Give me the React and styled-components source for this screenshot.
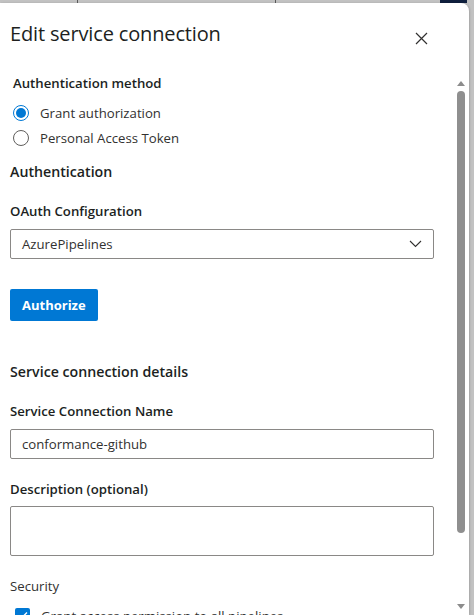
import React from "react";
import styled, { createGlobalStyle } from "styled-components";

const Global = createGlobalStyle`
  html, body { margin: 0; padding: 0; }
  body {
    font-family: "Open Sans", "Noto Sans", "Liberation Sans", sans-serif;
    color: #201f1e;
    background: #c4c4c4;
  }
  * { box-sizing: border-box; }
`;

const Screen = styled.div`
  width: 474px;
  height: 615px;
  overflow: hidden;
  display: flex;
  flex-direction: column;
  background: #c2c2c2;
`;

const BackTabs = styled.div`
  height: 3px;
  flex: none;
  display: flex;
`;

const BackTab = styled.div`
  width: ${(p) => p.$w}px;
  border-right: 1px solid ${(p) => (p.$line ? "#5a5a5a" : "transparent")};
  background: ${(p) => p.$bg || "transparent"};
`;

const Panel = styled.div`
  flex: 1;
  width: 469px;
  background: #ffffff;
  border-top-right-radius: 8px;
  display: flex;
  flex-direction: column;
  overflow: hidden;
  box-shadow: 1px 0 2px rgba(0, 0, 0, 0.15);
`;

const Header = styled.div`
  height: 70px;
  flex: none;
  display: flex;
  align-items: flex-start;
  justify-content: space-between;
  padding: 17px 41px 0 10px;
`;

const Title = styled.h1`
  margin: 0;
  font-size: 20px;
  line-height: 28px;
  font-weight: 400;
  letter-spacing: -0.15px;
  color: #201f1e;
`;

const CloseButton = styled.button`
  border: none;
  background: none;
  padding: 0;
  margin-top: 11px;
  width: 14px;
  height: 14px;
  display: flex;
  align-items: center;
  justify-content: center;
  color: #323130;
`;

const Body = styled.div`
  flex: 1;
  display: flex;
  min-height: 0;
`;

const Content = styled.div`
  flex: 1;
  padding: 0 21px 0 10px;
  overflow: hidden;
`;

const ScrollBar = styled.div`
  width: 14px;
  flex: none;
  margin-right: 1px;
  display: flex;
  flex-direction: column;
  align-items: center;
  padding: 8px 0 6px;
`;

const Arrow = styled.div`
  width: 0;
  height: 0;
  border-left: 4.5px solid transparent;
  border-right: 4.5px solid transparent;
  ${(p) =>
    p.$down
      ? "border-top: 5px solid #8c8c8c;"
      : "border-bottom: 5px solid #8c8c8c;"}
`;

const Thumb = styled.div`
  width: 8px;
  height: 442px;
  margin: 5px 0 auto;
  border-radius: 4px;
  background: #8f8f8f;
`;

const Label = styled.div`
  margin-top: ${(p) => p.$gap || 0}px;
  font-size: 13.2px;
  line-height: 20px;
  font-weight: 600;
  color: #201f1e;
  padding-left: ${(p) => p.$indent || 0}px;
`;

const SectionTitle = styled.div`
  margin-top: ${(p) => p.$gap || 0}px;
  font-size: 14.2px;
  line-height: 22px;
  font-weight: 600;
  color: #201f1e;
`;

const PlainLabel = styled.div`
  margin-top: ${(p) => p.$gap || 0}px;
  font-size: 13.2px;
  line-height: 20px;
  font-weight: 400;
  color: #323130;
`;

const RadioGroup = styled.div`
  margin-top: 7px;
  display: flex;
  flex-direction: column;
  padding-left: 3px;
`;

const RadioRow = styled.label`
  height: 25px;
  display: flex;
  align-items: center;
  gap: 11px;
  font-size: 13.2px;
  color: #323130;
`;

const RadioCircle = styled.span`
  width: 16px;
  height: 16px;
  border-radius: 50%;
  flex: none;
  border: 1px solid ${(p) => (p.$checked ? "#0078d4" : "#605e5c")};
  display: flex;
  align-items: center;
  justify-content: center;
  &::after {
    content: "";
    width: 10px;
    height: 10px;
    border-radius: 50%;
    background: ${(p) => (p.$checked ? "#0078d4" : "transparent")};
  }
`;

const Box = styled.div`
  margin-top: ${(p) => p.$gap || 0}px;
  width: 424px;
  height: ${(p) => p.$h || 30}px;
  border: 1px solid #8a8886;
  border-radius: 2px;
  display: flex;
  align-items: center;
  justify-content: space-between;
  padding: 0 11px 0 11px;
  font-size: 13.2px;
  color: #323130;
`;

const PrimaryButton = styled.button`
  margin-top: 30px;
  height: 32px;
  padding: 0 12px;
  border: none;
  border-radius: 2px;
  background: #0078d4;
  color: #ffffff;
  font-family: inherit;
  font-size: 13px;
  font-weight: 700;
  display: block;
`;

const CheckRow = styled.div`
  margin-top: 11px;
  padding-left: 5px;
  display: flex;
  align-items: flex-start;
  gap: 11px;
  font-size: 13.2px;
  color: #323130;
`;

const CheckBox = styled.span`
  width: 15px;
  height: 15px;
  flex: none;
  border-radius: 2px;
  background: #0078d4;
  display: flex;
  align-items: center;
  justify-content: center;
  margin-top: 1px;
`;

export default function App() {
  return (
    <>
      <Global />
      <Screen>
        <BackTabs>
          <BackTab $w={78} $line />
          <BackTab $w={198} $line />
          <BackTab $w={164} />
          <BackTab $w={27} $bg="#0f1f3d" />
        </BackTabs>
        <Panel>
          <Header>
            <Title>Edit service connection</Title>
            <CloseButton aria-label="Close">
              <svg width="13" height="13" viewBox="0 0 13 13">
                <path d="M1 1 L12 12 M12 1 L1 12" stroke="#323130" strokeWidth="1.2" fill="none" />
              </svg>
            </CloseButton>
          </Header>
          <Body>
            <Content>
              <Label $indent={3}>Authentication method</Label>
              <RadioGroup>
                <RadioRow>
                  <RadioCircle $checked />
                  Grant authorization
                </RadioRow>
                <RadioRow>
                  <RadioCircle />
                  Personal Access Token
                </RadioRow>
              </RadioGroup>
              <SectionTitle $gap={11}>Authentication</SectionTitle>
              <Label $gap={18}>OAuth Configuration</Label>
              <Box $gap={8}>
                <span>AzurePipelines</span>
                <svg width="13" height="8" viewBox="0 0 13 8">
                  <path d="M1 1 L6.5 6.5 L12 1" stroke="#323130" strokeWidth="1.1" fill="none" />
                </svg>
              </Box>
              <PrimaryButton>Authorize</PrimaryButton>
              <SectionTitle $gap={40}>Service connection details</SectionTitle>
              <Label $gap={18}>Service Connection Name</Label>
              <Box $gap={8}>
                <span>conformance-github</span>
              </Box>
              <Label $gap={20}>Description (optional)</Label>
              <Box $gap={7} $h={50} />
              <PlainLabel $gap={20}>Security</PlainLabel>
              <CheckRow>
                <CheckBox>
                  <svg width="11" height="9" viewBox="0 0 11 9">
                    <path d="M1 4.5 L4 7.5 L10 1.5" stroke="#fff" strokeWidth="1.4" fill="none" />
                  </svg>
                </CheckBox>
                <span>Grant access permission to all pipelines</span>
              </CheckRow>
            </Content>
            <ScrollBar>
              <Arrow />
              <Thumb />
              <Arrow $down />
            </ScrollBar>
          </Body>
        </Panel>
      </Screen>
    </>
  );
}
